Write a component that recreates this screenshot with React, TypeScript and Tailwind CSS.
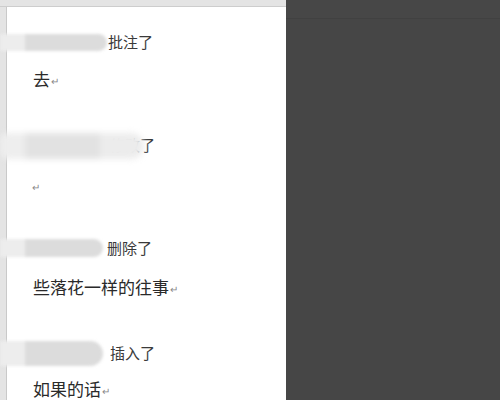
const cjk = { fontFamily: '"Noto Sans CJK SC", "Noto Sans", sans-serif' }

const Pill = ({ w, h }: { w: number; h: number }) => (
    <div className="flex shrink-0 -ml-[7px] blur-[1.5px]" style={{ width: w, height: h }}>
        <div className="w-[25px] h-full bg-[#ededed]"></div>
        <div className="flex-1 h-full bg-[#dcdcdc] rounded-r-full"></div>
    </div>
)

const Ret = () => <span className="text-[10px] text-[#888] ml-[1px] relative top-[1px]">↵</span>

const App = () => {
    return (
        <div className="flex w-[500px] h-[400px] overflow-hidden" style={cjk}>
            <div className="w-[286px] flex flex-col">
                <div className="h-[7px] bg-[#e4e4e4] border-b border-[#cdcdcd] shrink-0"></div>
                <div className="flex flex-1">
                    <div className="w-[7px] bg-[#e4e4e4] border-r border-[#c9c9c9] shrink-0"></div>
                    <div className="flex-1 bg-white flex flex-col pt-[25px]">
                        <div className="flex items-center h-[20px]">
                            <Pill w={107} h={17} />
                            <span className="ml-[1px] text-[15px] text-[#3a3a3a]">批注了</span>
                        </div>
                        <div className="flex items-center h-[22px] mt-[16px] pl-[26px] text-[17px] text-[#2a2a2a]">
                            去<Ret />
                        </div>

                        <div className="relative flex items-center h-[20px] mt-[45px]">
                            <span className="ml-[103px] text-[15px] text-[#3a3a3a]">修改了</span>
                            <div className="absolute -left-[7px] top-[-2px] w-[144px] h-[26px] blur-[3px] flex">
                                <div className="w-[25px] h-full bg-[#eeeeee] rounded-l-md"></div>
                                <div className="w-[75px] h-full bg-[#e2e2e2]"></div>
                                <div className="flex-1 h-full bg-[#ececec] rounded-r-full"></div>
                            </div>
                        </div>
                        <div className="flex items-center h-[22px] mt-[19px] pl-[24px]">
                            <Ret />
                        </div>

                        <div className="flex items-center h-[20px] mt-[42px]">
                            <Pill w={103} h={18} />
                            <span className="ml-[4px] text-[15px] text-[#3a3a3a]">删除了</span>
                        </div>
                        <div className="flex items-center h-[22px] mt-[18px] pl-[26px] text-[17px] text-[#2a2a2a]">
                            些落花一样的往事<Ret />
                        </div>

                        <div className="flex items-center h-[20px] mt-[45px]">
                            <Pill w={103} h={25} />
                            <span className="ml-[7px] text-[15px] text-[#3a3a3a]">插入了</span>
                        </div>
                        <div className="flex items-center h-[20px] mt-[16px] pl-[26px] text-[17px] text-[#2a2a2a]">
                            如果的话<Ret />
                        </div>
                    </div>
                </div>
            </div>
            <div className="flex-1 flex flex-col bg-[#464646]">
                <div className="h-[19px] bg-[#474747] border-b border-[#414141]"></div>
            </div>
        </div>
    )
}

export default App
